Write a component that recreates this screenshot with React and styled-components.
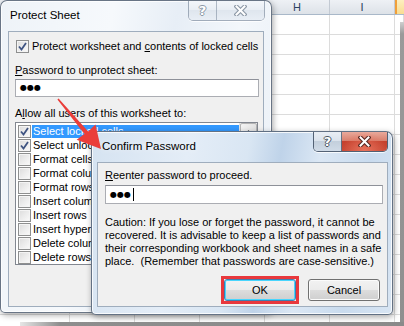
import React from 'react'
import styled, { createGlobalStyle, css } from 'styled-components'

const FONT = `"Liberation Sans", Arial, sans-serif`

const GlobalStyle = createGlobalStyle`
    html, body {
        margin: 0;
        padding: 0;
        background: #fff;
        overflow: hidden;
    }
`

// columns left of H sit under the dialogs, so they carry no letter
const columns = [
    { key: 'd', label: '', width: 70 },
    { key: 'e', label: '', width: 65 },
    { key: 'f', label: '', width: 65 },
    { key: 'g', label: '', width: 65 },
    { key: 'h', label: 'H', width: 65 },
    { key: 'i', label: 'I', width: 65 },
    { key: 'j', label: '', width: 9, active: true },
]

const rows = Array.from({ length: 16 }, (_, i) => i)

const permissions = [
    { label: 'Select locked cells', checked: true, selected: true },
    { label: 'Select unlocked cells', checked: true },
    { label: 'Format cells' },
    { label: 'Format columns' },
    { label: 'Format rows' },
    { label: 'Insert columns' },
    { label: 'Insert rows' },
    { label: 'Insert hyperlinks' },
    { label: 'Delete columns' },
    { label: 'Delete rows' },
]

const CloseGlyph = ({ fill, edge }) => (
    <svg width="13" height="11" viewBox="0 0 13 11">
        <path d="M2.5 1.5 L10.5 9.5 M10.5 1.5 L2.5 9.5" stroke={edge} strokeWidth="4.2" strokeLinecap="square" fill="none" />
        <path d="M2.5 1.5 L10.5 9.5 M10.5 1.5 L2.5 9.5" stroke={fill} strokeWidth="2" strokeLinecap="square" fill="none" />
    </svg>
)

const CheckBox = ({ checked }) => (
    <Box>
        {checked && (
            <svg width="9" height="9" viewBox="0 0 9 9">
                <path d="M1 4.5 L3.5 7.5 L8 1" stroke="#3f5482" strokeWidth="1.8" fill="none" />
            </svg>
        )}
    </Box>
)

const Caption = ({ active }) => (
    <CaptionGroup $active={active}>
        <HelpButton $active={active}>?</HelpButton>
        <CloseButton $active={active}>
            <CloseGlyph fill="#fff" edge={active ? '#5a2a24' : '#8c98a6'} />
        </CloseButton>
    </CaptionGroup>
)

const Arrow = () => (
    <ArrowLayer width="404" height="326" viewBox="0 0 404 326">
        <polygon
            points="58.6,98.6 88.2,131.6 95.5,124.6 101,149 76.6,139.8 84.5,134.1 57.4,99.4"
            fill="#ea3e3a"
        />
    </ArrowLayer>
)

const App = () => (
    <Screen>
        <GlobalStyle />
        <Sheet>
            <HeaderRow>
                {columns.map((c) => (
                    <HeaderCell key={c.key} $w={c.width} $active={c.active}>
                        {c.label}
                    </HeaderCell>
                ))}
            </HeaderRow>
            {rows.map((r) => (
                <Row key={r}>
                    {columns.map((c) => (
                        <Cell key={c.key} $w={c.width} />
                    ))}
                </Row>
            ))}
        </Sheet>

        <Window $x={0} $y={0} $w={272} $h={313} $pad="0 7px 5px 7px">
            <TitleBar>
                <Title $left={2}>Protect Sheet</Title>
                <Caption />
            </TitleBar>
            <Client $pad="8px 5px 0 6px">
                <CheckRow>
                    <CheckBox checked />
                    <span>Protect worksheet and <u>c</u>ontents of locked cells</span>
                </CheckRow>
                <Label $mt={10}><u>P</u>assword to unprotect sheet:</Label>
                <TextBox $mt={2} $w={244} $h={18}>
                    <Dots>●●●</Dots>
                </TextBox>
                <Label $mt={9}>A<u>l</u>low all users of this worksheet to:</Label>
                <ListBox>
                    <Items>
                        {permissions.map((p) => (
                            <Item key={p.label}>
                                <CheckBox checked={p.checked} />
                                <ItemText $selected={p.selected}>{p.label}</ItemText>
                            </Item>
                        ))}
                    </Items>
                    <ScrollBar>
                        <ScrollButton>
                            <svg width="7" height="4" viewBox="0 0 7 4">
                                <path d="M0 4 L3.5 0 L7 4 Z" fill="#4d4d4d" />
                            </svg>
                        </ScrollButton>
                    </ScrollBar>
                </ListBox>
            </Client>
        </Window>

        <Window $x={91} $y={131} $w={302} $h={184} $pad="0 4px 7px 5px" $active>
            <TitleBar>
                <Title $left={5}>Confirm Password</Title>
                <Caption active />
            </TitleBar>
            <Client $pad="5px 7px 0 7px">
                <Label><u>R</u>eenter password to proceed.</Label>
                <TextBox $mt={3} $w={278} $h={19}>
                    <Dots>●●●</Dots>
                    <Caret />
                </TextBox>
                <Caution>
                    Caution: If you lose or forget the password, it cannot be<br />
                    recovered. It is advisable to keep a list of passwords and<br />
                    their corresponding workbook and sheet names in a safe<br />
                    place.&nbsp; (Remember that passwords are case-sensitive.)
                </Caution>
                <ButtonRow>
                    <Focus>
                        <Button $default>OK</Button>
                    </Focus>
                    <Button>Cancel</Button>
                </ButtonRow>
            </Client>
        </Window>

        <Arrow />
    </Screen>
)

const Screen = styled.div`
    position: relative;
    width: 404px;
    height: 326px;
    overflow: hidden;
    font-family: ${FONT};
    font-size: 11px;
    color: #000;
    background: #fff;

    &::before {
        content: '';
        position: absolute;
        right: 0;
        top: 22px;
        width: 4px;
        bottom: 4px;
        z-index: 5;
        background: linear-gradient(#cfcfcf, #9a9a9a 12px, #8f8f8f);
    }

    &::after {
        content: '';
        position: absolute;
        left: 20px;
        right: 0;
        bottom: 0;
        height: 4px;
        z-index: 5;
        background: linear-gradient(90deg, #e6e6e6, #8e8e8e 40px, #8a8a8a);
    }
`

const Sheet = styled.div`
    display: flex;
    flex-direction: column;
`

const HeaderRow = styled.div`
    display: flex;
    height: 14px;
    border-bottom: 1px solid #a9b8c9;
    background: linear-gradient(#eef1f5, #dde2e8);
`

const HeaderCell = styled.div`
    box-sizing: border-box;
    flex: 0 0 ${(p) => p.$w}px;
    border-right: 1px solid #c3cad3;
    font-size: 11px;
    line-height: 14px;
    text-align: center;
    color: #2c4262;

    ${(p) =>
        p.$active &&
        css`
            border-right: none;
            border-left: 2px solid #f0a03a;
            background: linear-gradient(#fdefbf, #f9dc92);
        `}
`

const Row = styled.div`
    display: flex;
    height: 20px;
    box-sizing: border-box;
    border-bottom: 1px solid #dcdcdc;
`

const Cell = styled.div`
    box-sizing: border-box;
    flex: 0 0 ${(p) => p.$w}px;
    border-right: 1px solid #dcdcdc;
`

const Window = styled.div`
    position: absolute;
    left: ${(p) => p.$x}px;
    top: ${(p) => p.$y}px;
    width: ${(p) => p.$w}px;
    height: ${(p) => p.$h}px;
    box-sizing: border-box;
    display: flex;
    flex-direction: column;
    padding: ${(p) => p.$pad};
    border: 1px solid rgba(60, 75, 95, 0.75);
    border-radius: 7px 7px 5px 5px;
    box-shadow: 1px 2px 6px rgba(0, 0, 0, 0.35), inset 0 0 0 1px rgba(255, 255, 255, 0.8);
    background: ${(p) =>
        p.$active
            ? 'linear-gradient(100deg, #d5e3f1 0%, #e4edf7 30%, #d9e6f3 48%, #bfd3e9 58%, #dbe7f4 70%, #c9dbee 85%, #d8e5f3 100%)'
            : 'linear-gradient(100deg, #eef3f8 0%, #f6f9fc 35%, #e7eef6 55%, #f3f7fb 75%, #e9eff6 100%)'};
`

const TitleBar = styled.div`
    display: flex;
    justify-content: space-between;
    align-items: flex-start;
    height: 30px;
    flex: none;
`

const Title = styled.div`
    padding: 6px 0 0 ${(p) => p.$left}px;
    line-height: 16px;
    font-size: 11.5px;
    color: #000;
    text-shadow: 0 0 6px rgba(255, 255, 255, 0.9);
`

const CaptionGroup = styled.div`
    display: flex;
    height: 19px;
    margin-right: ${(p) => (p.$active ? 0 : -1)}px;
    border: 1px solid ${(p) => (p.$active ? 'rgba(50, 65, 85, 0.8)' : 'rgba(110, 125, 145, 0.6)')};
    border-top: none;
    border-radius: 0 0 5px 5px;
    overflow: hidden;
    box-shadow: 0 1px 0 rgba(255, 255, 255, 0.8);
`

const HelpButton = styled.div`
    width: 27px;
    display: flex;
    align-items: center;
    justify-content: center;
    font-family: "DejaVu Sans", sans-serif;
    font-weight: bold;
    font-size: 13px;
    color: #fff;
    border-right: 1px solid ${(p) => (p.$active ? 'rgba(50, 65, 85, 0.7)' : 'rgba(110, 125, 145, 0.5)')};
    text-shadow: 1px 0 ${(p) => (p.$active ? '#4c5663' : '#8c98a6')}, -1px 0 ${(p) => (p.$active ? '#4c5663' : '#8c98a6')},
        0 1px ${(p) => (p.$active ? '#4c5663' : '#8c98a6')}, 0 -1px ${(p) => (p.$active ? '#4c5663' : '#8c98a6')};
    background: ${(p) =>
        p.$active
            ? 'linear-gradient(#e9eef4, #dbe3ec 45%, #c3cfdc 50%, #d0dbe7)'
            : 'linear-gradient(#f3f6fa, #e9eef4 45%, #dfe6ee 50%, #e8eef5)'};
`

const CloseButton = styled.div`
    width: ${(p) => (p.$active ? 45 : 47)}px;
    display: flex;
    align-items: center;
    justify-content: center;
    background: ${(p) =>
        p.$active
            ? 'radial-gradient(ellipse at 50% 100%, #e8725c 0%, rgba(232, 114, 92, 0) 70%), linear-gradient(#e9a99b, #d9816f 45%, #c5412e 50%, #c94a36)'
            : 'linear-gradient(#f3f6fa, #e9eef4 45%, #dfe6ee 50%, #e8eef5)'};
`

const Client = styled.div`
    flex: 1;
    display: flex;
    flex-direction: column;
    padding: ${(p) => p.$pad};
    background: #f0f0f0;
    border: 1px solid #9fadbd;
    overflow: hidden;
`

const CheckRow = styled.div`
    display: flex;
    align-items: center;
    gap: 3px;
    height: 13px;
    margin-left: 1px;
    line-height: 13px;
    white-space: nowrap;
`

const Box = styled.div`
    box-sizing: border-box;
    flex: 0 0 13px;
    height: 13px;
    display: flex;
    align-items: center;
    justify-content: center;
    border: 1px solid #8e8f8f;
    background: linear-gradient(135deg, #dcdcdc, #fbfbfb);
    box-shadow: inset 0 0 0 1px #f4f4f4;
`

const Label = styled.div`
    margin-top: ${(p) => p.$mt || 0}px;
    line-height: 14px;
    white-space: nowrap;
`

const TextBox = styled.div`
    box-sizing: border-box;
    display: flex;
    align-items: center;
    width: ${(p) => p.$w}px;
    height: ${(p) => p.$h}px;
    margin-top: ${(p) => p.$mt}px;
    padding-left: 4px;
    background: #fff;
    border: 1px solid #abadb3;
    border-top-color: #8e9199;
`

const Dots = styled.span`
    font-family: "DejaVu Sans", sans-serif;
    font-size: 8px;
    line-height: 12px;
`

const Caret = styled.span`
    width: 1px;
    height: 13px;
    margin-left: 2px;
    background: #000;
`

const ListBox = styled.div`
    box-sizing: border-box;
    display: flex;
    width: 243px;
    height: 143px;
    margin-top: 2px;
    background: #fff;
    border: 1px solid #828790;
`

const Items = styled.div`
    flex: 1;
    display: flex;
    flex-direction: column;
    padding-top: 1px;
`

const Item = styled.div`
    display: flex;
    align-items: center;
    height: 14px;
    padding-left: 2px;
    white-space: nowrap;
`

const ItemText = styled.div`
    flex: 1;
    height: 13px;
    margin-left: 1px;
    padding-left: 1px;
    line-height: 13px;
    overflow: hidden;

    ${(p) =>
        p.$selected &&
        css`
            background: #3399ff;
            color: #fff;
        `}
`

const ScrollBar = styled.div`
    flex: 0 0 17px;
    display: flex;
    flex-direction: column;
    background: #ececec;
    border-left: 1px solid #e3e3e3;
`

const ScrollButton = styled.div`
    box-sizing: border-box;
    height: 17px;
    display: flex;
    align-items: center;
    justify-content: center;
    border: 1px solid #b4b4b4;
    border-radius: 2px;
    background: linear-gradient(90deg, #f3f3f3, #e2e2e2);
`

const Caution = styled.div`
    margin-top: 12px;
    line-height: 13px;
    white-space: nowrap;
`

const ButtonRow = styled.div`
    display: flex;
    justify-content: flex-end;
    gap: 12px;
    margin-top: 11px;
`

const Focus = styled.div`
    display: flex;
    margin: -3px;
    border: 3px solid #e8383d;
`

const Button = styled.div`
    box-sizing: border-box;
    width: 72px;
    height: 22px;
    display: flex;
    align-items: center;
    justify-content: center;
    border: 1px solid #707070;
    border-radius: 3px;
    background: linear-gradient(#f2f2f2, #ebebeb 50%, #dddddd 50%, #cfcfcf);
    box-shadow: inset 0 0 0 1px #fbfbfb;

    ${(p) =>
        p.$default &&
        css`
            border-color: #3c7fb1;
            box-shadow: inset 0 0 0 1px #48d5fd;
        `}
`

const ArrowLayer = styled.svg`
    position: absolute;
    left: 0;
    top: 0;
    z-index: 10;
    pointer-events: none;
`

export default App
